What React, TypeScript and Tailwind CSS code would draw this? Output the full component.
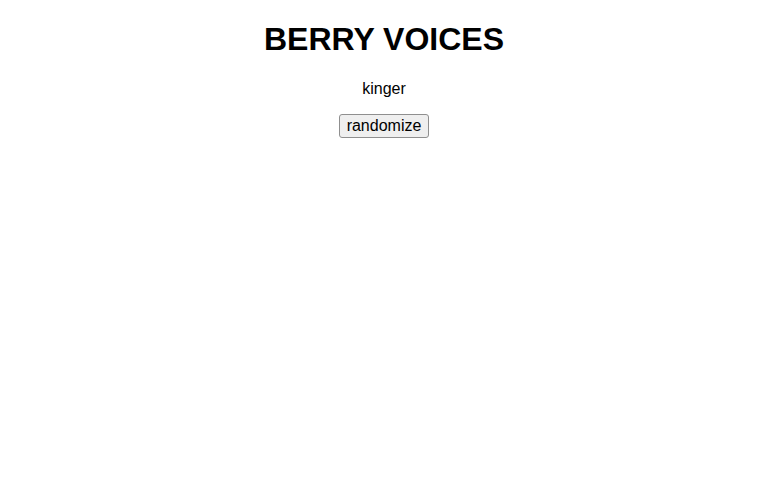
export default function App() {
  return (
    <div className="bg-white text-center text-black font-['Liberation_Sans',Arial,sans-serif]">
      {/* Title */}
      <h1 className="pt-[21px] mb-[22px] text-[32px] leading-[37px] font-bold">BERRY VOICES</h1>

      {/* Current voice */}
      <p className="mb-4 text-base leading-[18px]">kinger</p>

      <button className="px-[7px] py-[2px] text-base leading-[18px] bg-[#efefef] border border-[#8f8f8f] rounded-[3px]">
        randomize
      </button>
    </div>
  );
}
